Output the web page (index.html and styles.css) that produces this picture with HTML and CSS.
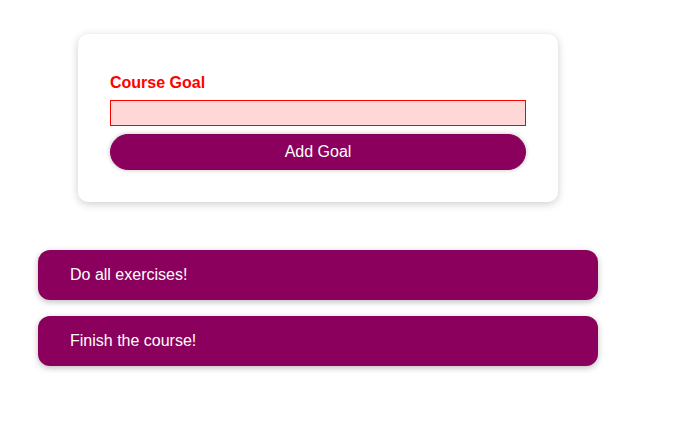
FILE: index.html
```html
<!DOCTYPE html>
<html lang="en">
<head>
<meta charset="utf-8">
<title>Course Goals</title>
<link rel="stylesheet" href="styles.css">
</head>
<body>
<div class="page">
  <section class="goal-form">
    <form>
      <div class="form-control invalid">
        <label for="goal">Course Goal</label>
        <input id="goal" type="text">
      </div>
      <button type="button" class="button">Add Goal</button>
    </form>
  </section>
  <section class="goals">
    <ul class="goal-list">
      <li class="goal-item">Do all exercises!</li>
      <li class="goal-item">Finish the course!</li>
    </ul>
  </section>
</div>
</body>
</html>
```
FILE: styles.css
```css
* { box-sizing: border-box; }
html { font-family: "Liberation Sans", Arial, sans-serif; font-size: 16px; }
body { margin: 0; background: #fff; }
.page { width: 636px; padding-top: 34px; }
.goal-form {
  width: 480px;
  margin: 0 auto;
  padding: 32px;
  background: #fff;
  border-radius: 10px;
  box-shadow: 0 2px 8px rgba(0,0,0,0.2);
}
.goal-form form { margin: 0; }
.form-control { margin: 8px 0; }
.form-control label {
  display: block;
  font-weight: bold;
  margin-bottom: 8px;
  line-height: 18px;
}
.form-control input {
  display: block;
  width: 100%;
  font: inherit;
  line-height: 23px;
  height: 26px;
  padding: 0 4px;
  border: 1px solid #ccc;
  outline: none;
}
.form-control.invalid label { color: #ff0000; }
.form-control.invalid input { border-color: #ff0000; background: #ffd7d7; }
.button {
  display: block;
  width: 100%;
  font: inherit;
  line-height: 18px;
  padding: 8px 24px;
  border: 1px solid #8b005d;
  color: #fff;
  background: #8b005d;
  border-radius: 18px;
  margin-top: 8px;
  box-shadow: 0 0 4px rgba(0,0,0,0.26);
}
.goals { width: 560px; margin: 48px auto 0; }
.goal-list { list-style: none; margin: 0; padding: 0; }
.goal-item {
  margin: 0 0 16px;
  background: #8b005d;
  color: #fff;
  padding: 16px 32px;
  line-height: 18px;
  border-radius: 12px;
  box-shadow: 0 2px 6px rgba(0,0,0,0.26);
}
```
